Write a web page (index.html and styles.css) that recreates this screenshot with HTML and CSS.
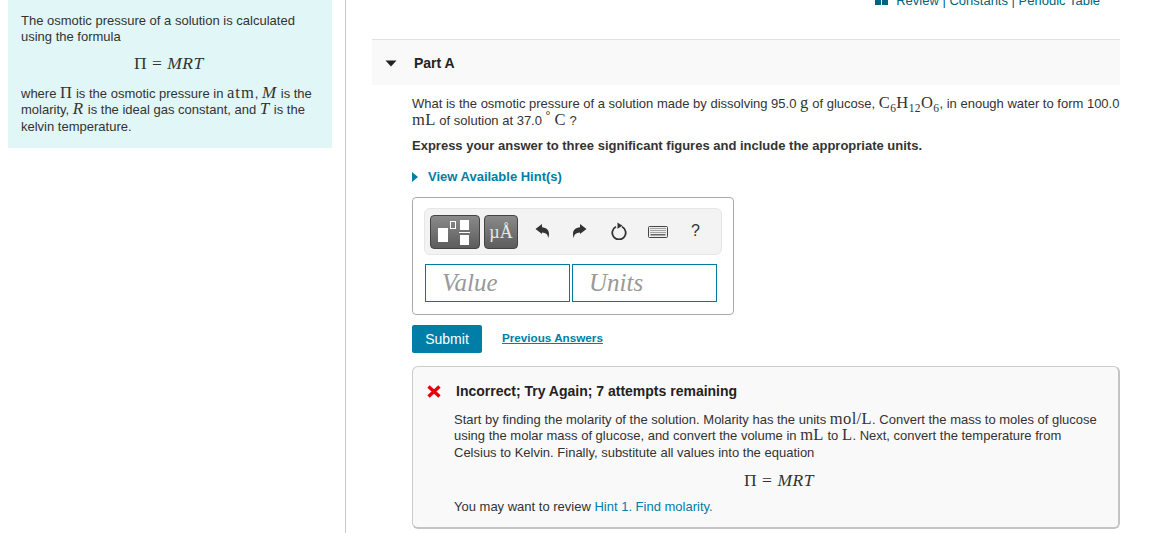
FILE: index.html
```html
<!DOCTYPE html>
<html lang="en">
<head>
    <meta charset="UTF-8">
    <title>Part A</title>
    <link rel="stylesheet" href="styles.css">
</head>
<body>
    <div class="page">
        <div class="left-col">
            <div class="intro">
                <p>The osmotic pressure of a solution is calculated using the formula</p>
                <div class="eq"><span class="m">&Pi; = <i>MRT</i></span></div>
                <p>where <span class="m big">&Pi;</span> is the osmotic pressure in <span class="m big wide">atm</span>, <span class="m big"><i>M</i></span> is the molarity, <span class="m big"><i>R</i></span> is the ideal gas constant, and <span class="m big"><i>T</i></span> is the kelvin temperature.</p>
            </div>
        </div>
        <div class="right-col">
            <div class="top-links">
                <svg class="book" width="13" height="6" viewBox="0 0 13 6"><rect width="6" height="6" fill="#00637f"/><rect x="7" width="6" height="6" fill="#00637f"/></svg>
                <span>Review | Constants | Periodic Table</span>
            </div>
            <div class="part-head">
                <svg class="caret" width="12" height="7" viewBox="0 0 12 7"><path d="M0.5 0.5h11L6 6.5z" fill="#222"/></svg>
                <span>Part A</span>
            </div>
            <div class="part-body">
                <p class="question">What is the osmotic pressure of a solution made by dissolving 95.0 <span class="m big">g</span> of glucose, <span class="m big">C<sub>6</sub>H<sub>12</sub>O<sub>6</sub></span>, in enough water to form 100.0 <span class="m big">mL</span> of solution at 37.0 <span class="m big"><sup>&deg;</sup>&#8201;C</span> ?</p>
                <p class="express">Express your answer to three significant figures and include the appropriate units.</p>
                <div class="hints">
                    <svg width="6" height="10" viewBox="0 0 6 10"><path d="M0 0l6 5-6 5z" fill="#007ea8"/></svg>
                    <span>View Available Hint(s)</span>
                </div>
                <div class="answer-box">
                    <div class="toolbar">
                        <div class="tool-btn tmpl">
                            <svg width="36" height="30" viewBox="0 0 36 30">
                                <rect x="1" y="11" width="10" height="14" fill="#fff"/>
                                <rect x="13.5" y="4.5" width="5" height="7" fill="none" stroke="#fff"/>
                                <rect x="23" y="3" width="9" height="10" fill="#fff"/>
                                <rect x="22" y="15" width="11" height="1" fill="#fff"/>
                                <rect x="23" y="18" width="9" height="10" fill="#fff"/>
                            </svg>
                        </div>
                        <div class="tool-btn unit">&micro;&Aring;</div>
                        <svg class="tool-ic undo" width="15" height="16" viewBox="0 0 15 16"><path d="M0.500 6L7 1v3.200c4.500.3 7 2.800 7 6.800 0 1.500-.3 3-1 4 .2-3.500-2-5.300-6-5.600V11z" fill="#333"/></svg>
                        <svg class="tool-ic redo" width="15" height="16" viewBox="0 0 15 16"><path d="M14.500 6L8 1v3.200C3.500 4.500 1 7 1 11c0 1.500.3 3 1 4-.2-3.500 2-5.300 6-5.600V11z" fill="#333"/></svg>
                        <svg class="tool-ic reset" width="16" height="18" viewBox="0 0 16 18"><path d="M5 4.800a6.700 6.700 0 1 0 6 0" fill="none" stroke="#333" stroke-width="1.800"/><path d="M6.500 0.500l5 3.200-5 3z" fill="#333"/></svg>
                        <svg class="tool-ic keys" width="20" height="12" viewBox="0 0 20 12">
                            <rect x="0.500" y="0.500" width="19" height="11" rx="1" fill="#eee" stroke="#444"/>
                            <path d="M2.500 2.500h15M2.500 4.500h15M2.500 6.500h15" stroke="#555" stroke-dasharray="1 1"/>
                            <rect x="2.500" y="8" width="15" height="1.500" fill="#666"/>
                        </svg>
                        <span class="tool-help">?</span>
                    </div>
                    <div class="inputs">
                        <div class="field">Value</div>
                        <div class="field">Units</div>
                    </div>
                </div>
                <div class="actions">
                    <button class="btn">Submit</button>
                    <a class="prev" href="#">Previous Answers</a>
                </div>
                <div class="feedback">
                    <div class="fb-title">
                        <svg width="14" height="13" viewBox="0 0 14 13"><path d="M1.500 1.500l11 10M12.500 1.500l-11 10" stroke="#e8000d" stroke-width="3.400"/></svg>
                        <span>Incorrect; Try Again; 7 attempts remaining</span>
                    </div>
                    <div class="fb-body">
                        <p>Start by finding the molarity of the solution. Molarity has the units <span class="m big">mol/L</span>. Convert the mass to moles of glucose using the molar mass of glucose, and convert the volume in <span class="m big">mL</span> to <span class="m big">L</span>. Next, convert the temperature from Celsius to Kelvin. Finally, substitute all values into the equation</p>
                        <div class="eq"><span class="m">&Pi; = <i>MRT</i></span></div>
                        <p>You may want to review <a class="hint-link" href="#">Hint 1. Find molarity.</a></p>
                    </div>
                </div>
            </div>
        </div>
    </div>
</body>
</html>
```

FILE: styles.css
```css
* {
    margin: 0;
    padding: 0;
    box-sizing: border-box;
}
html, body {
    height: 533px;
    overflow: hidden;
}
body {
    font-family: 'Liberation Sans', Arial, sans-serif;
    font-size: 13px;
    line-height: 16.5px;
    color: #333;
    background: #fff;
}
a {
    color: #007ea8;
}
.page {
    display: flex;
    height: 533px;
}
.left-col {
    width: 346px;
    flex-shrink: 0;
    border-right: 1px solid #c9c9d0;
    padding-left: 8px;
}
.intro {
    width: 324px;
    height: 148px;
    background: #e1f6f6;
    padding: 12.5px 13px;
    line-height: 16.3px;
}
.m {
    font-family: 'Liberation Serif', 'Times New Roman', serif;
    line-height: 0;
}
.big {
    font-size: 16.5px;
    letter-spacing: 0.4px;
}
.big i {
    font-size: 17px;
    letter-spacing: 1px;
}
.wide {
    letter-spacing: 1px;
}
.m sub {
    font-size: 11.5px;
    line-height: 0;
}
.m sup {
    font-size: 12px;
    line-height: 0;
}
.eq {
    font-size: 17.5px;
    letter-spacing: 0.5px;
    color: #333;
}
.intro .eq {
    margin: 9px 0 13px;
    padding-left: 113px;
    line-height: 19px;
}
.right-col {
    flex: 1;
    padding: 0 33px 0 26px;
    min-width: 0;
}
.top-links {
    display: flex;
    align-items: center;
    justify-content: flex-end;
    gap: 8px;
    margin-top: -7px;
    height: 16px;
    padding-right: 20px;
    color: #00637f;
    font-size: 13px;
}
.top-links .book {
    margin-top: 1px;
}
.part-head {
    display: flex;
    align-items: center;
    margin-top: 30px;
    height: 46px;
    padding-top: 1px;
    padding-left: 13px;
    background: #f9f9f9;
    border-top: 1px solid #e1e1e1;
    font-size: 14px;
    font-weight: bold;
    color: #222;
}
.part-head .caret {
    margin-right: 17px;
}
.part-body {
    padding-left: 40px;
}
.question {
    margin-top: 11px;
}
.express {
    margin-top: 9px;
    font-weight: bold;
}
.hints {
    display: flex;
    align-items: center;
    gap: 10px;
    margin-top: 14px;
    font-weight: bold;
    color: #007ea8;
}
.answer-box {
    width: 322px;
    height: 118px;
    margin-top: 12px;
    border: 1px solid #aaa;
    border-radius: 4px;
    padding: 10px 11px;
}
.toolbar {
    display: flex;
    align-items: center;
    height: 47px;
    padding-left: 5px;
    background: #f3f3f3;
    border: 1px solid #e6e6e6;
    border-radius: 6px;
}
.tool-btn {
    display: flex;
    align-items: center;
    justify-content: center;
    height: 34px;
    background: linear-gradient(#8b8a8b, #5d5c5d);
    border: 1px solid #444;
    border-radius: 4px;
    color: #e8e8e8;
}
.tmpl {
    width: 50px;
    margin-right: 4px;
}
.unit {
    width: 34px;
    font-family: 'Liberation Serif', serif;
    font-size: 18px;
    padding-top: 1px;
}
.tool-ic {
    flex-shrink: 0;
}
.undo {
    margin-left: 17px;
    margin-top: -2px;
}
.redo {
    margin-left: 22px;
    margin-top: -2px;
}
.reset {
    margin-left: 24px;
    margin-top: -2px;
}
.keys {
    margin-left: 21px;
}
.tool-help {
    margin-left: 23px;
    font-size: 16px;
    color: #333;
}
.inputs {
    display: flex;
    gap: 2px;
    margin-top: 9px;
    padding-left: 1px;
}
.field {
    width: 145px;
    height: 38px;
    border: 1px solid #007a9c;
    padding-left: 16px;
    font-family: 'Liberation Serif', serif;
    font-style: italic;
    font-size: 25px;
    line-height: 36px;
    color: #999;
}
.actions {
    display: flex;
    align-items: center;
    margin-top: 10px;
}
.btn {
    width: 70px;
    height: 28px;
    background: #007ea8;
    border: none;
    border-radius: 2px;
    color: #fff;
    font-family: inherit;
    font-size: 14px;
}
.prev {
    margin-left: 20px;
    margin-top: -2px;
    font-size: 11.7px;
    font-weight: bold;
}
.feedback {
    height: 163px;
    margin-top: 13px;
    background: #f9f9f9;
    border: 1px solid #ccc;
    border-bottom: 2px solid #c4c4c4;
    border-right: 2px solid #c4c4c4;
    border-radius: 6px;
    padding: 16px 14px 0;
}
.fb-title {
    display: flex;
    align-items: center;
    gap: 15px;
    font-size: 14px;
    font-weight: bold;
    color: #222;
}
.fb-body {
    margin-top: 12px;
    padding-left: 27px;
}
.fb-body .eq {
    margin: 10px 0 9px;
    text-align: center;
    line-height: 19px;
}
.hint-link {
    text-decoration: none;
}
```
